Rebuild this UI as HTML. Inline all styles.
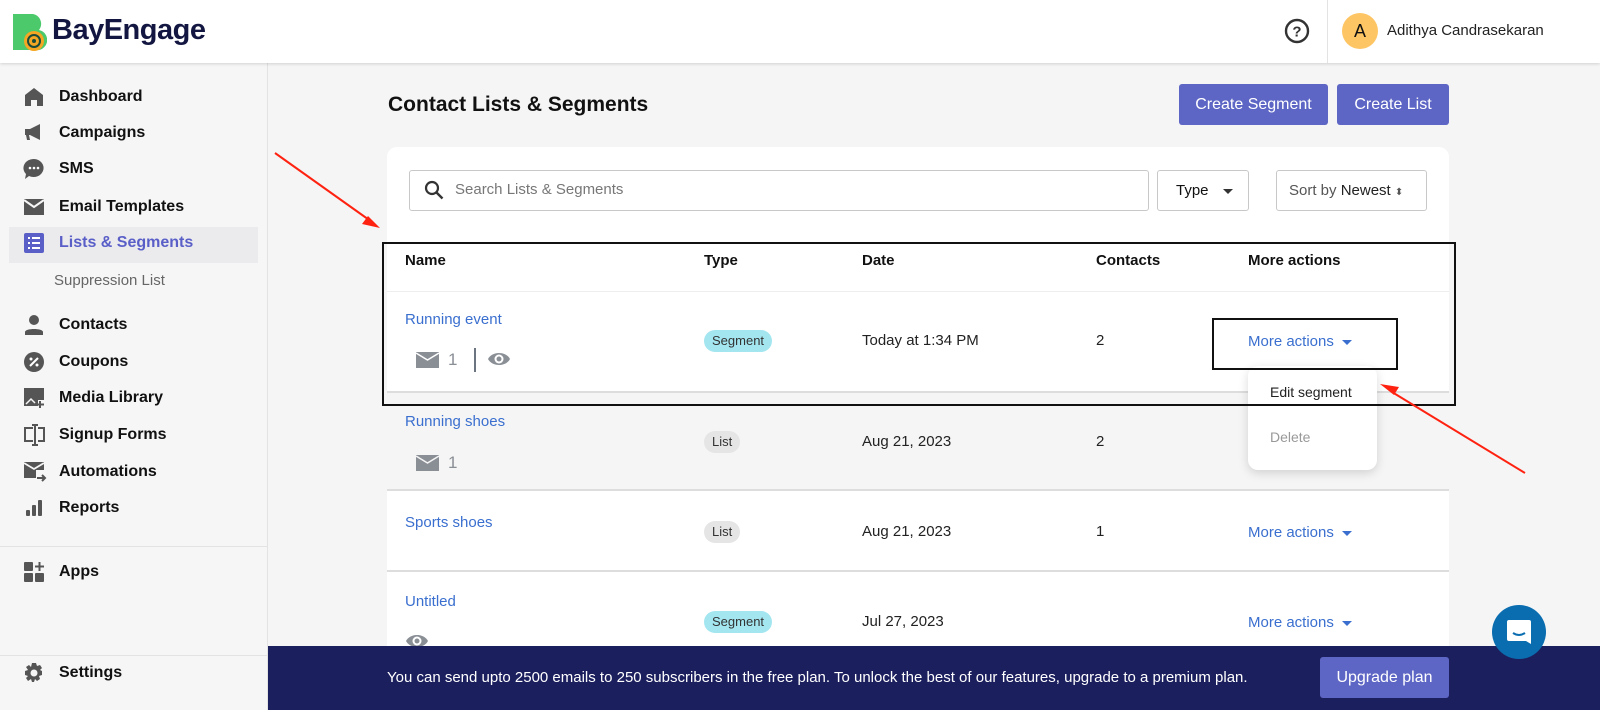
<!DOCTYPE html>
<html><head><meta charset="utf-8"><style>
*{box-sizing:border-box;margin:0;padding:0}
body{width:1600px;height:724px;overflow:hidden;background:#f5f5f5;font-family:"Liberation Sans",sans-serif;position:relative;color:#111}
.top{position:absolute;left:0;top:0;width:1600px;height:63px;background:#fff;box-shadow:0 1px 3px rgba(0,0,0,.15);z-index:3}
.side{position:absolute;left:0;top:63px;width:268px;height:661px;background:#f6f6f6;border-right:1px solid #e3e3e3}
.nav{position:absolute;left:0;width:268px;height:34px;display:flex;align-items:center;font-size:16px;font-weight:bold;color:#111}
.nav svg{position:absolute;left:23px}
.nav span{position:absolute;left:59px}
.abs{position:absolute}
.th{position:absolute;top:252px;font-size:15px;font-weight:bold}
.link{color:#3a6fcf;font-size:15px;position:absolute}
.badge{position:absolute;height:22px;border-radius:11px;font-size:13px;line-height:22px;padding:0 8px;color:#333}
.cell{position:absolute;font-size:15px;color:#222}
.ma{position:absolute;left:1248px;color:#3a6fcf;font-size:15px}
.ma:after{content:"";display:inline-block;margin-left:8px;border-left:5px solid transparent;border-right:5px solid transparent;border-top:5px solid #3a6fcf;vertical-align:middle}
</style></head><body>
<div class="top">
 <svg class="abs" style="left:11px;top:12px" width="36" height="40" viewBox="0 0 36 40"><path d="M2 2h20a10 10 0 0 1 6 16a10 10 0 0 1 -4 20h-22z" fill="#4cc96a"/><circle cx="23" cy="29" r="10" fill="#f5a623"/><circle cx="23" cy="29" r="6" fill="none" stroke="#1a4a3a" stroke-width="2"/><circle cx="23" cy="29" r="2" fill="#1a4a3a"/></svg>
 <div class="abs" style="left:52px;top:14px;font-size:29px;font-weight:bold;color:#121640;letter-spacing:-.5px">BayEngage</div>
 <svg class="abs" style="left:1284px;top:18px" width="26" height="26" viewBox="0 0 26 26"><circle cx="13" cy="13" r="11" fill="none" stroke="#333" stroke-width="2.4"/><text x="13" y="18.5" font-size="15" font-weight="bold" text-anchor="middle" fill="#333" font-family="Liberation Sans">?</text></svg>
 <div class="abs" style="left:1327px;top:0;width:1px;height:63px;background:#e3e3e3"></div>
 <div class="abs" style="left:1342px;top:13px;width:36px;height:36px;border-radius:50%;background:#fdc564;text-align:center;line-height:36px;font-size:18px">A</div>
 <div class="abs" style="left:1387px;top:22px;font-size:15px;color:#222">Adithya Candrasekaran</div>
</div>
<div class="side"></div>
<div class="abs" style="left:9px;top:227px;width:249px;height:36px;background:#ebebee"></div>
<div class="nav" style="top:80px"><svg width="22" height="20" viewBox="0 0 22 20"><path d="M11 1L2 8v11h6v-6h6v6h6V8z" fill="#555"/></svg><span>Dashboard</span></div>
<div class="nav" style="top:116px"><svg width="22" height="20" viewBox="0 0 22 20"><path d="M2 6h5l10-5v16l-10-5H6l1 5H4l-1-5H2z" fill="#555"/></svg><span>Campaigns</span></div>
<div class="nav" style="top:152px"><svg width="22" height="22" viewBox="0 0 22 22"><path d="M11 1a10 9 0 1 1-5 17l-4 3 1-5A10 9 0 0 1 11 1z" fill="#555"/><circle cx="7" cy="10" r="1.3" fill="#fff"/><circle cx="11" cy="10" r="1.3" fill="#fff"/><circle cx="15" cy="10" r="1.3" fill="#fff"/></svg><span>SMS</span></div>
<div class="nav" style="top:190px"><svg width="22" height="18" viewBox="0 0 22 18"><path d="M1 1h20v16H1z" fill="#555"/><path d="M1 2l10 7 10-7" fill="none" stroke="#f6f6f6" stroke-width="2"/></svg><span>Email Templates</span></div>
<div class="nav" style="top:226px;color:#5a5fc8"><svg width="22" height="22" viewBox="0 0 22 22"><rect x="1" y="1" width="20" height="20" rx="2" fill="#5a5fc8"/><path d="M5 6h2M9 6h8M5 11h2M9 11h8M5 16h2M9 16h8" stroke="#fff" stroke-width="2"/></svg><span>Lists &amp; Segments</span></div>
<div class="abs" style="left:54px;top:272px;font-size:15px;color:#666">Suppression List</div>
<div class="nav" style="top:308px"><svg width="22" height="22" viewBox="0 0 22 22"><circle cx="11" cy="6" r="5" fill="#555"/><path d="M2 21v-3c0-4 18-4 18 0v3z" fill="#555"/></svg><span>Contacts</span></div>
<div class="nav" style="top:345px"><svg width="22" height="22" viewBox="0 0 22 22"><circle cx="11" cy="11" r="10" fill="#555"/><path d="M7 15l8-8" stroke="#fff" stroke-width="2"/><circle cx="8" cy="8" r="1.5" fill="#fff"/><circle cx="14" cy="14" r="1.5" fill="#fff"/></svg><span>Coupons</span></div>
<div class="nav" style="top:381px"><svg width="22" height="22" viewBox="0 0 22 22"><path d="M1 1h20v12h-6v6H1z" fill="#555"/><path d="M17 14v7M14 17.5h7" stroke="#555" stroke-width="2"/><path d="M3 17l5-5 4 4" stroke="#f6f6f6" stroke-width="1.5" fill="none"/></svg><span>Media Library</span></div>
<div class="nav" style="top:418px"><svg width="24" height="22" viewBox="0 0 24 22"><path d="M10 4H2v13h8M15 4h6v13h-6M12 1v20M9 1h6M9 21h6" stroke="#555" stroke-width="2" fill="none"/></svg><span>Signup Forms</span></div>
<div class="nav" style="top:455px"><svg width="24" height="22" viewBox="0 0 24 22"><path d="M1 1h20v8h-8v8H1z" fill="#555"/><path d="M1 2l10 6 10-6" stroke="#f6f6f6" stroke-width="1.8" fill="none"/><path d="M14 17h8M19 14l3 3-3 3" stroke="#555" stroke-width="2" fill="none"/></svg><span>Automations</span></div>
<div class="nav" style="top:491px"><svg width="22" height="20" viewBox="0 0 22 20"><rect x="3" y="12" width="4" height="6" rx="1" fill="#555"/><rect x="9" y="7" width="4" height="11" rx="1" fill="#555"/><rect x="15" y="2" width="4" height="16" rx="1" fill="#555"/></svg><span>Reports</span></div>
<div class="abs" style="left:0;top:546px;width:268px;height:1px;background:#e3e3e3"></div>
<div class="nav" style="top:555px"><svg width="22" height="22" viewBox="0 0 22 22"><rect x="1" y="1" width="9" height="9" rx="1" fill="#555"/><rect x="1" y="12" width="9" height="9" rx="1" fill="#555"/><rect x="12" y="12" width="9" height="9" rx="1" fill="#555"/><path d="M16.5 1v9M12 5.5h9" stroke="#555" stroke-width="2"/></svg><span>Apps</span></div>
<div class="abs" style="left:0;top:655px;width:268px;height:1px;background:#e3e3e3"></div>
<div class="nav" style="top:656px"><svg width="22" height="22" viewBox="0 0 22 22"><path d="M9 1h4l1 3 3-1 2 3-2 2 2 1v4l-3 1 1 3-3 2-2-2-1 3H9l-1-3-3 2-2-3 2-2-3-1V9l3-1-2-3 3-2 2 2z" fill="#555"/><circle cx="11" cy="11" r="3.5" fill="#f6f6f6"/></svg><span>Settings</span></div>

<div class="abs" style="left:388px;top:93px;font-size:21px;font-weight:bold">Contact Lists &amp; Segments</div>
<div class="abs" style="left:1179px;top:84px;width:149px;height:41px;background:#5d66c4;border-radius:3px;color:#fff;font-size:16px;text-align:center;line-height:41px">Create Segment</div>
<div class="abs" style="left:1337px;top:84px;width:112px;height:41px;background:#5d66c4;border-radius:3px;color:#fff;font-size:16px;text-align:center;line-height:41px">Create List</div>

<div class="abs" style="left:387px;top:147px;width:1062px;height:520px;background:#fff;border-radius:10px"></div>
<div class="abs" style="left:409px;top:170px;width:740px;height:41px;border:1px solid #c8c8c8;border-radius:3px"></div>
<svg class="abs" style="left:424px;top:180px" width="20" height="20" viewBox="0 0 20 20"><circle cx="8" cy="8" r="6" fill="none" stroke="#333" stroke-width="2.2"/><path d="M12.5 12.5l6 6" stroke="#333" stroke-width="2.4"/></svg>
<div class="abs" style="left:455px;top:181px;font-size:15px;color:#777">Search Lists &amp; Segments</div>
<div class="abs" style="left:1157px;top:170px;width:92px;height:41px;border:1px solid #c8c8c8;border-radius:3px;font-size:15px;line-height:39px;padding-left:18px">Type <span style="display:inline-block;margin-left:10px;border-left:5px solid transparent;border-right:5px solid transparent;border-top:5px solid #333;vertical-align:middle"></span></div>
<div class="abs" style="left:1276px;top:170px;width:151px;height:41px;border:1px solid #c8c8c8;border-radius:3px;font-size:15px;line-height:39px;padding-left:12px;color:#555">Sort by <span style="color:#222">Newest</span> <span style="font-size:10px">⬍</span></div>

<div class="th" style="left:405px">Name</div><div class="th" style="left:704px">Type</div><div class="th" style="left:862px">Date</div><div class="th" style="left:1096px">Contacts</div><div class="th" style="left:1248px">More actions</div>
<div class="abs" style="left:387px;top:291px;width:1062px;height:1px;background:#eee"></div>
<div class="abs" style="left:387px;top:391px;width:1062px;height:100px;background:#f5f5f5;border-top:2px solid #ddd;border-bottom:2px solid #ddd"></div>
<div class="abs" style="left:387px;top:570px;width:1062px;height:2px;background:#ddd"></div>

<div class="link" style="left:405px;top:311px">Running event</div>
<svg class="abs" style="left:416px;top:352px" width="23" height="16" viewBox="0 0 23 16"><path d="M0 0h23v16H0z" fill="#8a8f96"/><path d="M0 1l11.5 7L23 1" stroke="#fff" stroke-width="1.5" fill="none"/></svg>
<div class="abs" style="left:448px;top:350px;font-size:17px;color:#8a8f96">1</div>
<div class="abs" style="left:474px;top:348px;width:2px;height:24px;background:#6b7480"></div>
<svg class="abs" style="left:487px;top:350px" width="24" height="18" viewBox="0 0 24 18"><path d="M1 9C5 1 19 1 23 9C19 17 5 17 1 9z" fill="#8a8f96"/><circle cx="12" cy="9" r="4.5" fill="#fff"/><circle cx="12" cy="9" r="2.5" fill="#8a8f96"/></svg>
<div class="badge" style="left:704px;top:330px;background:#a3e6f0">Segment</div>
<div class="cell" style="left:862px;top:332px">Today at 1:34 PM</div>
<div class="cell" style="left:1096px;top:332px">2</div>
<div class="ma" style="top:333px">More actions</div>

<div class="link" style="left:405px;top:413px">Running shoes</div>
<svg class="abs" style="left:416px;top:455px" width="23" height="16" viewBox="0 0 23 16"><path d="M0 0h23v16H0z" fill="#8a8f96"/><path d="M0 1l11.5 7L23 1" stroke="#f5f5f5" stroke-width="1.5" fill="none"/></svg>
<div class="abs" style="left:448px;top:453px;font-size:17px;color:#8a8f96">1</div>
<div class="badge" style="left:704px;top:431px;background:#e5e5e5">List</div>
<div class="cell" style="left:862px;top:433px">Aug 21, 2023</div>
<div class="cell" style="left:1096px;top:433px">2</div>

<div class="link" style="left:405px;top:514px">Sports shoes</div>
<div class="badge" style="left:704px;top:521px;background:#e5e5e5">List</div>
<div class="cell" style="left:862px;top:523px">Aug 21, 2023</div>
<div class="cell" style="left:1096px;top:523px">1</div>
<div class="ma" style="top:524px">More actions</div>

<div class="link" style="left:405px;top:593px">Untitled</div>
<svg class="abs" style="left:405px;top:632px" width="24" height="18" viewBox="0 0 24 18"><path d="M1 9C5 1 19 1 23 9C19 17 5 17 1 9z" fill="#8a8f96"/><circle cx="12" cy="9" r="4.5" fill="#fff"/><circle cx="12" cy="9" r="2.5" fill="#8a8f96"/></svg>
<div class="badge" style="left:704px;top:611px;background:#a3e6f0">Segment</div>
<div class="cell" style="left:862px;top:613px">Jul 27, 2023</div>
<div class="ma" style="top:614px">More actions</div>

<div class="abs" style="left:1248px;top:366px;width:129px;height:104px;background:#fff;border-radius:10px;box-shadow:0 3px 10px rgba(0,0,0,.15)"></div>
<div class="abs" style="left:1270px;top:384px;font-size:14px;color:#222">Edit segment</div>
<div class="abs" style="left:1270px;top:429px;font-size:14px;color:#999">Delete</div>

<div class="abs" style="left:382px;top:242px;width:1074px;height:164px;border:2px solid #111"></div>
<div class="abs" style="left:1212px;top:318px;width:186px;height:52px;border:2px solid #111"></div>
<svg class="abs" style="left:0;top:0" width="1600" height="724"><path d="M275 153L372 222" stroke="#f21" stroke-width="2"/><path d="M380 228l-18-4 6-8z" fill="#f21"/><path d="M1525 473L1392 392" stroke="#f21" stroke-width="2"/><path d="M1380 384l19 3-5 8z" fill="#f21"/></svg>

<div class="abs" style="left:268px;top:646px;width:1332px;height:64px;background:#1c1f5e"></div>
<div class="abs" style="left:0;top:710px;width:1600px;height:14px;background:#fff"></div>
<div class="abs" style="left:387px;top:669px;font-size:15px;color:#fff">You can send upto 2500 emails to 250 subscribers in the free plan. To unlock the best of our features, upgrade to a premium plan.</div>
<div class="abs" style="left:1320px;top:657px;width:129px;height:41px;background:#5d66c4;border-radius:3px;color:#fff;font-size:16px;text-align:center;line-height:41px">Upgrade plan</div>
<div class="abs" style="left:1492px;top:605px;width:54px;height:54px;border-radius:50%;background:#0a6db0"></div>
<svg class="abs" style="left:1505px;top:618px" width="28" height="28" viewBox="0 0 28 28"><path d="M4 2h20a2 2 0 0 1 2 2v22l-5-3H4a2 2 0 0 1-2-2V4a2 2 0 0 1 2-2z" fill="#fff"/><path d="M8 15q6 4 12 0" stroke="#0a6db0" stroke-width="2" fill="none"/></svg>
</body></html>
